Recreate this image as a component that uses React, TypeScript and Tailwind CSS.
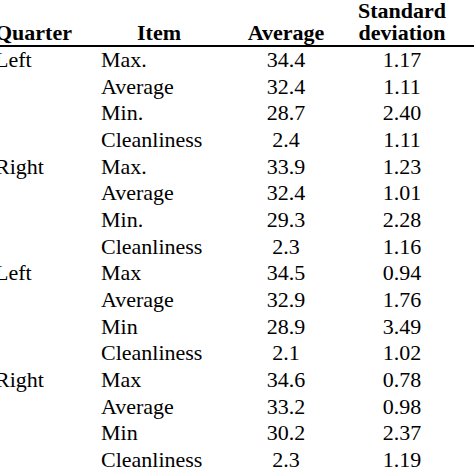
import React from 'react';

const groups = [
  {
    quarter: 'Left',
    rows: [
      ['Max.', '34.4', '1.17'],
      ['Average', '32.4', '1.11'],
      ['Min.', '28.7', '2.40'],
      ['Cleanliness', '2.4', '1.11'],
    ],
  },
  {
    quarter: 'Right',
    rows: [
      ['Max.', '33.9', '1.23'],
      ['Average', '32.4', '1.01'],
      ['Min.', '29.3', '2.28'],
      ['Cleanliness', '2.3', '1.16'],
    ],
  },
  {
    quarter: 'Left',
    rows: [
      ['Max', '34.5', '0.94'],
      ['Average', '32.9', '1.76'],
      ['Min', '28.9', '3.49'],
      ['Cleanliness', '2.1', '1.02'],
    ],
  },
  {
    quarter: 'Right',
    rows: [
      ['Max', '34.6', '0.78'],
      ['Average', '33.2', '0.98'],
      ['Min', '30.2', '2.37'],
      ['Cleanliness', '2.3', '1.19'],
    ],
  },
];

const App = () => {
  return (
    <div className="w-[474px] h-[474px] overflow-hidden bg-white text-black">
      <div
        className="ml-[-5px] w-[479px] text-[22px]"
        style={{ fontFamily: '"Liberation Serif", "Times New Roman", serif' }}
      >
        <div className="flex items-end font-bold leading-[22px] pb-[1px] border-b-2 border-black">
          <div className="w-[106px]">Quarter</div>
          <div className="w-[116px] text-center">Item</div>
          <div className="w-[138px] text-center">Average</div>
          <div className="w-[94px] text-center">
            <div>Standard</div>
            <div>deviation</div>
          </div>
        </div>

        <div className="leading-[26.67px]">
          {groups.map((group, groupIndex) =>
            group.rows.map((row, rowIndex) => (
              <div key={`${groupIndex}-${rowIndex}`} className="flex">
                <div className="w-[106px]">{rowIndex === 0 ? group.quarter : ''}</div>
                <div className="w-[116px]">{row[0]}</div>
                <div className="w-[138px] text-center">{row[1]}</div>
                <div className="w-[94px] text-center">{row[2]}</div>
              </div>
            ))
          )}
        </div>
      </div>
    </div>
  );
};

export default App;
